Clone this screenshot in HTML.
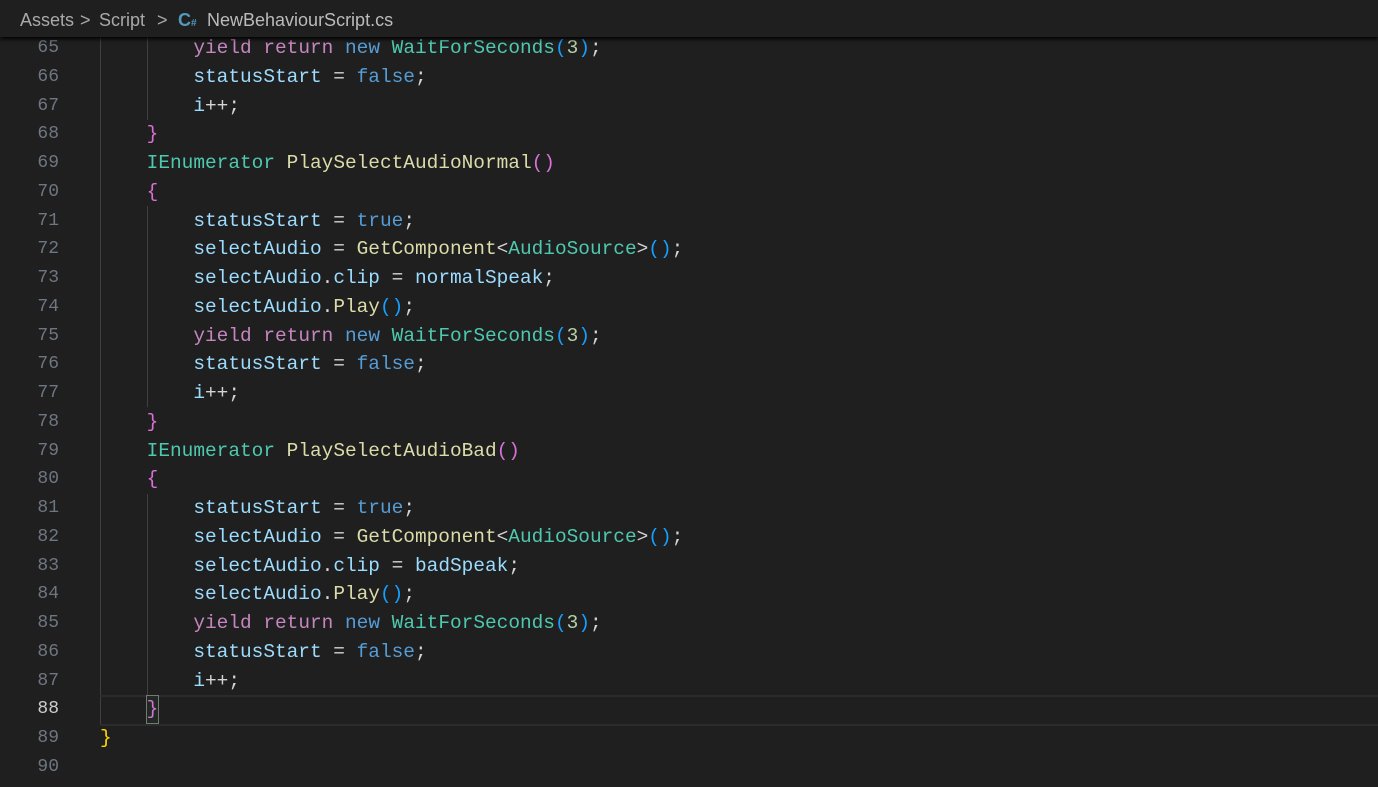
<!DOCTYPE html>
<html><head><meta charset="utf-8"><style>
body{margin:0;width:1378px;height:787px;background:#1f1f1f;overflow:hidden;position:relative;font-family:"Liberation Mono",monospace}
.bc{position:absolute;left:0;top:0;width:1378px;height:37px;background:#1f1f1f;box-shadow:0 2px 4px #000;z-index:3;font-family:"Liberation Sans",sans-serif;font-size:18px;color:#a9a9a9;line-height:40px}
.bc span{position:absolute;top:0}
.ln{position:absolute;left:0;width:59px;text-align:right;color:#6e7681;font-size:18px}
.cd{position:absolute;left:100px;font-size:19.45px;white-space:pre;color:#d4d4d4}
.row{position:absolute;left:0;width:1378px;height:28.76px;line-height:28.76px}
.v{color:#9cdcfe}.k{color:#c586c0}.b{color:#569cd6}.t{color:#4ec9b0}.f{color:#dcdcaa}.n{color:#b5cea8}.p{color:#da70d6}.q{color:#179fff}.y{color:#ffd700}
.g{position:absolute;width:1px;background:#404040}
</style></head><body>
<div class="bc"><span style="left:20px">Assets</span><span style="left:80px">&gt;</span><span style="left:99px">Script</span><span style="left:157px">&gt;</span><span style="left:178px;color:#519aba;font-weight:bold">C<span style="font-size:10px;position:static">#</span></span><span style="left:207px;color:#bbb">NewBehaviourScript.cs</span></div>
<div class="g" style="left:100px;top:34px;height:690px"></div>
<div class="g" style="left:147px;top:34px;height:86px"></div>
<div class="g" style="left:147px;top:206px;height:201px"></div>
<div class="g" style="left:147px;top:494px;height:201px"></div>
<div style="position:absolute;left:100px;top:695px;width:1278px;height:27px;border-top:2px solid #2b2b2b;border-bottom:2px solid #2b2b2b"></div>
<div style="position:absolute;left:146px;top:695px;width:11px;height:27px;border:1px solid #777;background:#1e2a22"></div>
<div id="c"></div>
<script>
var L=[
['65','        <span class=k>yield</span> <span class=k>return</span> <span class=b>new</span> <span class=t>WaitForSeconds</span><span class=q>(</span><span class=n>3</span><span class=q>)</span>;'],
['66','        <span class=v>statusStart</span> = <span class=b>false</span>;'],
['67','        <span class=v>i</span>++;'],
['68','    <span class=p>}</span>'],
['69','    <span class=t>IEnumerator</span> <span class=f>PlaySelectAudioNormal</span><span class=p>()</span>'],
['70','    <span class=p>{</span>'],
['71','        <span class=v>statusStart</span> = <span class=b>true</span>;'],
['72','        <span class=v>selectAudio</span> = <span class=f>GetComponent</span>&lt;<span class=t>AudioSource</span>&gt;<span class=q>()</span>;'],
['73','        <span class=v>selectAudio</span>.<span class=v>clip</span> = <span class=v>normalSpeak</span>;'],
['74','        <span class=v>selectAudio</span>.<span class=f>Play</span><span class=q>()</span>;'],
['75','        <span class=k>yield</span> <span class=k>return</span> <span class=b>new</span> <span class=t>WaitForSeconds</span><span class=q>(</span><span class=n>3</span><span class=q>)</span>;'],
['76','        <span class=v>statusStart</span> = <span class=b>false</span>;'],
['77','        <span class=v>i</span>++;'],
['78','    <span class=p>}</span>'],
['79','    <span class=t>IEnumerator</span> <span class=f>PlaySelectAudioBad</span><span class=p>()</span>'],
['80','    <span class=p>{</span>'],
['81','        <span class=v>statusStart</span> = <span class=b>true</span>;'],
['82','        <span class=v>selectAudio</span> = <span class=f>GetComponent</span>&lt;<span class=t>AudioSource</span>&gt;<span class=q>()</span>;'],
['83','        <span class=v>selectAudio</span>.<span class=v>clip</span> = <span class=v>badSpeak</span>;'],
['84','        <span class=v>selectAudio</span>.<span class=f>Play</span><span class=q>()</span>;'],
['85','        <span class=k>yield</span> <span class=k>return</span> <span class=b>new</span> <span class=t>WaitForSeconds</span><span class=q>(</span><span class=n>3</span><span class=q>)</span>;'],
['86','        <span class=v>statusStart</span> = <span class=b>false</span>;'],
['87','        <span class=v>i</span>++;'],
['88','    <span class=p>}</span>'],
['89','<span class=y>}</span>'],
['90','']];
var h='';
L.forEach(function(l,i){var t=34+i*28.76;
h+='<div class="row" style="top:'+t+'px"><div class="ln"'+(l[0]=='88'?' style="color:#ccc"':'')+'>'+l[0]+'</div><div class="cd">'+l[1]+'</div></div>';});
document.getElementById('c').innerHTML=h;
</script>
</body></html>
